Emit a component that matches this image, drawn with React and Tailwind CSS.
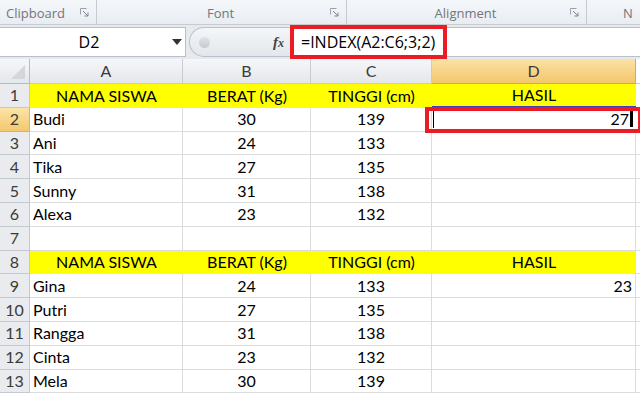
import React from "react";

const rows = [
  { n: 1, h: true },
  { n: 2, a: "Budi", b: "30", c: "139", d: "27", sel: true },
  { n: 3, a: "Ani", b: "24", c: "133" },
  { n: 4, a: "Tika", b: "27", c: "135" },
  { n: 5, a: "Sunny", b: "31", c: "138" },
  { n: 6, a: "Alexa", b: "23", c: "132" },
  { n: 7, empty: true },
  { n: 8, h: true },
  { n: 9, a: "Gina", b: "24", c: "133", d: "23" },
  { n: 10, a: "Putri", b: "27", c: "135" },
  { n: 11, a: "Rangga", b: "31", c: "138" },
  { n: 12, a: "Cinta", b: "23", c: "132" },
  { n: 13, a: "Mela", b: "30", c: "139" },
];

const cellFont = { fontFamily: "Lato, 'Noto Sans', sans-serif" };

function LauncherIcon() {
  return (
    <svg width="9" height="9" viewBox="0 0 9 9" className="shrink-0">
      <path d="M0.5 0.5h6M0.5 0.5v6" stroke="#9aa3ad" strokeWidth="1" fill="none" />
      <path d="M3 3l5 5M8 4.5V8H4.5" stroke="#7d8690" strokeWidth="1" fill="none" />
    </svg>
  );
}

function Row({ r }) {
  const rowHeader = r.sel
    ? "bg-gradient-to-b from-[#fbe3a7] to-[#f4c86d] border-[#e0b155]"
    : "bg-[#e9ebee] border-[#c4c8cf]";
  const yellow = r.h ? "bg-[#ffff00]" : "bg-white";
  return (
    <div className="contents">
      <div
        className={`h-[23.8px] flex items-center justify-center border-r border-b text-[16px] text-[#3b3b3b] ${rowHeader}`}
        style={cellFont}
      >
        {r.n}
      </div>
      {r.h ? (
        <>
          <div className="h-[23.8px] bg-[#ffff00] flex items-center justify-center text-[16px] text-black" style={cellFont}>NAMA SISWA</div>
          <div className="h-[23.8px] bg-[#ffff00] flex items-center justify-center text-[16px] text-black" style={cellFont}>BERAT (Kg)</div>
          <div className="h-[23.8px] bg-[#ffff00] flex items-center justify-center text-[16px] text-black" style={cellFont}>TINGGI (cm)</div>
          <div className={`h-[23.8px] bg-[#ffff00] flex items-center justify-center text-[16px] text-black ${r.n === 1 ? "border-b-2 border-[#3b3bc4]" : ""}`} style={cellFont}>HASIL</div>
          <div className="h-[23.8px] bg-white border-b border-[#dadcdd]"></div>
        </>
      ) : (
        <>
          <div className={`h-[23.8px] ${yellow} border-r border-b border-[#dadcdd] flex items-center pl-[3px] text-[16px] text-black`} style={cellFont}>{r.a}</div>
          <div className="h-[23.8px] bg-white border-r border-b border-[#dadcdd] flex items-center justify-center text-[16px] text-black" style={cellFont}>{r.b}</div>
          <div className="h-[23.8px] bg-white border-r border-b border-[#dadcdd] flex items-center justify-center text-[16px] text-black" style={cellFont}>{r.c}</div>
          {r.sel ? (
            <div className="relative h-[23.8px] bg-white border-b border-[#dadcdd] flex items-center justify-end pr-[3px] text-[16px] text-black" style={cellFont}>
              <div className="absolute left-[1px] top-[3px] bottom-[3px] w-[1px] bg-black"></div>
              <span>27</span>
              <span className="ml-[1px] inline-block w-[3px] h-[16px] bg-black"></span>
              <div className="absolute -left-[7px] -top-[1px] -right-[6px] -bottom-[2px] border-[4px] border-[#ec1c24]"></div>
            </div>
          ) : (
            <div className="h-[23.8px] bg-white border-r border-b border-[#dadcdd] flex items-center justify-end pr-[3px] text-[16px] text-black" style={cellFont}>{r.d}</div>
          )}
          <div className="h-[23.8px] bg-white border-b border-[#dadcdd]"></div>
        </>
      )}
    </div>
  );
}

export default function App() {
  const ui = { fontFamily: "'Open Sans', 'Noto Sans', sans-serif" };
  return (
    <div className="w-[640px] h-[397px] overflow-hidden bg-white relative">
      {/* Ribbon group labels */}
      <div className="h-[25px] flex bg-gradient-to-b from-[#f5f7fa] to-[#e9edf2] border-b border-[#c7ccd3] text-[13px] text-[#72767c] pt-[3px]" style={ui}>
        <div className="w-[97px] flex items-center justify-between pl-[6px] pr-[7px] border-r border-[#c6cbd2] -mt-[3px]">
          <span className="pt-[3px]">Clipboard</span>
          <LauncherIcon />
        </div>
        <div className="w-[250px] flex items-center justify-between pr-[7px] border-r border-[#c6cbd2] -mt-[3px]">
          <span className="flex-1 text-center pl-[14px] pt-[3px]">Font</span>
          <LauncherIcon />
        </div>
        <div className="w-[240px] flex items-center justify-between pr-[7px] border-r border-[#c6cbd2] -mt-[3px]">
          <span className="flex-1 text-center pl-[14px] pt-[3px]">Alignment</span>
          <LauncherIcon />
        </div>
        <div className="flex-1 flex items-center pl-[36px] -mt-[3px]">
          <span className="pt-[3px]">N</span>
        </div>
      </div>

      {/* Formula bar */}
      <div className="h-[34px] flex items-stretch bg-[#e6e9ee]">
        <div className="w-[186px] my-[2px] bg-white border-y border-r border-[#b9c0c9] flex items-center relative" style={ui}>
          <span className="flex-1 text-center text-[16px] text-black pl-[6px]">D2</span>
          <svg width="10" height="6" viewBox="0 0 10 6" className="mr-[3px]">
            <path d="M0 0h10L5 6z" fill="#333" />
          </svg>
        </div>
        <div className="w-[104px] my-[2px] flex items-center relative">
          <div className="ml-[3px] w-[34px] h-full rounded-l-full border border-[#b9c0c9] border-r-0 bg-gradient-to-b from-[#f4f6f8] to-[#e3e7ec] flex items-center pl-[9px]">
            <div className="w-[11px] h-[11px] rounded-full bg-gradient-to-b from-[#e0e3e7] to-[#c6cbd1]"></div>
          </div>
          <div className="flex-1 h-full border-y border-[#b9c0c9] bg-gradient-to-b from-[#f4f6f8] to-[#e3e7ec] flex items-center justify-end pr-[6px]">
            <span className="text-[15px] italic font-bold text-[#444]" style={{ fontFamily: "'Liberation Serif', serif" }}>f<span className="text-[12px]">x</span></span>
          </div>
        </div>
        <div className="w-[157px] bg-white border-[4px] border-[#ec1c24] flex items-center pl-[7px] text-[16px] text-black" style={ui}>
          =INDEX(A2:C6;3;2)
        </div>
        <div className="flex-1 my-[2px] bg-white border-y border-[#b9c0c9]"></div>
      </div>

      {/* Grid */}
      <div className="grid grid-cols-[30px_153px_128px_121px_204px_1fr]">
        <div className="h-[25px] bg-gradient-to-b from-[#f6f7f9] to-[#e4e7eb] border-r border-b border-[#b5bcc6] relative">
          <svg width="14" height="14" viewBox="0 0 14 14" className="absolute right-[4px] bottom-[4px]">
            <path d="M14 0V14H0z" fill="#d3d7dc" />
          </svg>
        </div>
        {["A", "B", "C"].map((c) => (
          <div key={c} className="h-[25px] bg-gradient-to-b from-[#f6f7f9] to-[#e4e7eb] border-r border-b border-[#c8ccd2] flex items-center justify-center text-[16px] text-[#3b3b3b]" style={cellFont}>
            {c}
          </div>
        ))}
        <div className="h-[25px] bg-gradient-to-b from-[#fbe2a5] to-[#f3c66b] border-r border-b border-[#dba94a] flex items-center justify-center text-[16px] text-[#3b3b3b]" style={cellFont}>
          D
        </div>
        <div className="h-[25px] bg-white border-b border-[#c8ccd2]"></div>
        {rows.map((r) => (
          <Row key={r.n} r={r} />
        ))}
      </div>
    </div>
  );
}
